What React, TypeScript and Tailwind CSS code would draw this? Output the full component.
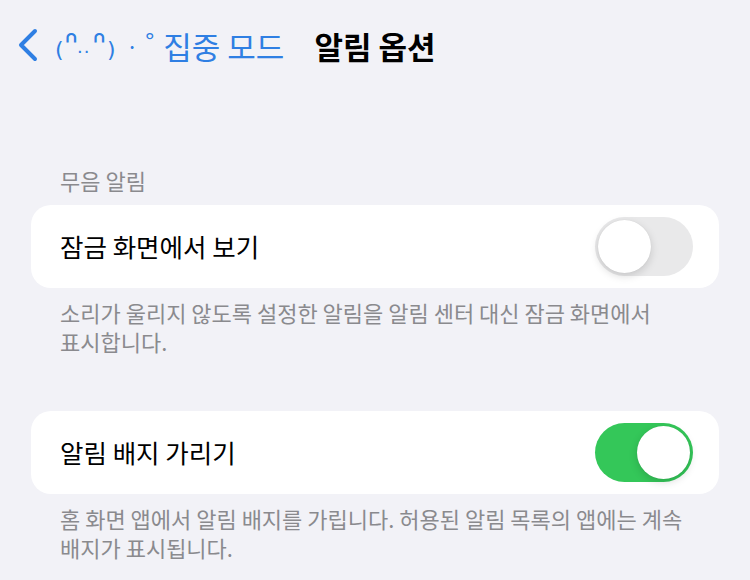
import React from 'react';

const Toggle = ({ on }: { on: boolean }) => (
    <div
        className={`w-[98px] h-[59px] rounded-full p-[3px] flex ${
            on ? 'bg-[#34c759] justify-end' : 'bg-[#e9e9ea] justify-start'
        }`}
    >
        <div className="w-[53px] h-[53px] rounded-full bg-white shadow-[0_3px_8px_rgba(0,0,0,0.15),0_0_1px_rgba(0,0,0,0.1)]" />
    </div>
);

const Section = (props: { label?: string; title: string; on: boolean; footer: string[] }) => (
    <div className="px-[31px]">
        {props.label && (
            <p className="pl-[29px] text-[22px] leading-[28px] text-[#8a8a8e] mb-[11px]">{props.label}</p>
        )}
        <div className="h-[83px] bg-white rounded-[20px] flex items-center justify-between pl-[29px] pr-[26px]">
            <span className="text-[25.5px] text-black">{props.title}</span>
            <Toggle on={props.on} />
        </div>
        <div className="pl-[29px] mt-[10px] text-[22px] leading-[29px] text-[#8a8a8e]">
            {props.footer.map((line) => (
                <p key={line}>{line}</p>
            ))}
        </div>
    </div>
);

export default function App() {
    return (
        <div className="w-[750px] h-[580px] overflow-hidden bg-[#f2f2f7] font-['Noto_Sans_CJK_KR',sans-serif]">
            <div className="h-[90px] flex items-center pl-[17px]">
                <svg width="22" height="34" viewBox="0 0 22 34" className="mr-[16px]">
                    <polyline
                        points="18,3 4,17 18,31"
                        fill="none"
                        stroke="#2f7fe3"
                        strokeWidth="4"
                        strokeLinecap="round"
                        strokeLinejoin="round"
                    />
                </svg>
                <div className="flex items-center text-[#2f7fe3]">
                    <span className="flex h-[32px] w-[62px] text-[22px] leading-none font-['DejaVu_Sans',sans-serif]">
                        <span className="self-end w-[8px]">(</span>
                        <span className="self-start mt-[9px] w-[14px] h-[14px] pl-[1px] text-[36px] leading-[14px]">ᐢ</span>
                        <span className="self-end w-[15px] mb-[5px] text-[18px] leading-none tracking-[1px]">..</span>
                        <span className="self-start mt-[9px] w-[15px] h-[14px] text-[36px] leading-[14px]">ᐢ</span>
                        <span className="self-end w-[10px]">)</span>
                    </span>
                    <span className="ml-[9px] text-[22px] leading-none">·</span>
                    <span className="ml-[6px] text-[22px] leading-none mb-[6px] font-['DejaVu_Sans',sans-serif]">°</span>
                    <span className="ml-[8px] text-[31px] leading-none">집중 모드</span>
                </div>
                <span className="ml-[30px] text-[31px] leading-none font-bold text-black">알림 옵션</span>
            </div>
            <div className="mt-[76px]">
                <Section
                    label="무음 알림"
                    title="잠금 화면에서 보기"
                    on={false}
                    footer={['소리가 울리지 않도록 설정한 알림을 알림 센터 대신 잠금 화면에서', '표시합니다.']}
                />
            </div>
            <div className="mt-[55px]">
                <Section
                    title="알림 배지 가리기"
                    on={true}
                    footer={['홈 화면 앱에서 알림 배지를 가립니다. 허용된 알림 목록의 앱에는 계속', '배지가 표시됩니다.']}
                />
            </div>
        </div>
    );
}
